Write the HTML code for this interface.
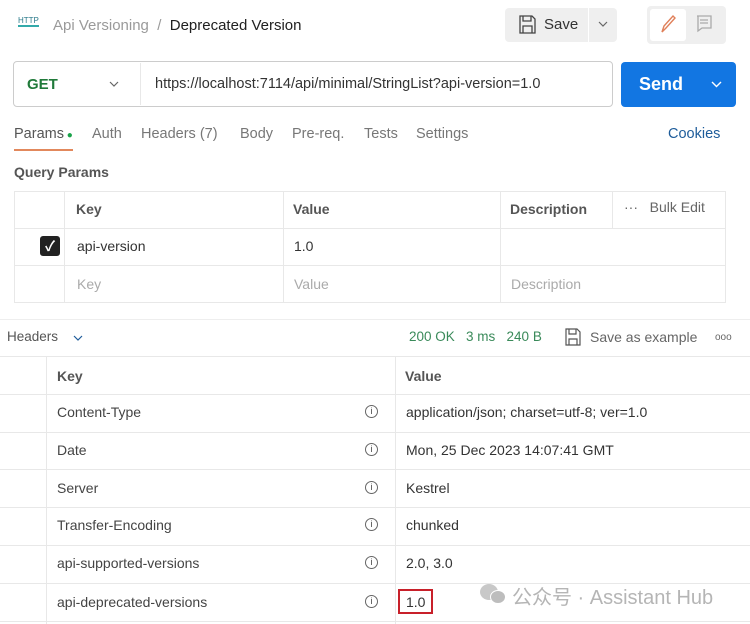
<!DOCTYPE html>
<html><head><meta charset="utf-8"><style>
*{box-sizing:border-box;margin:0;padding:0}
body{width:750px;height:624px;background:#fff;font-family:"Liberation Sans","Noto Sans CJK SC",sans-serif;color:#212121;position:relative;overflow:hidden;font-size:14px}
.a{position:absolute;white-space:nowrap}
.hl{position:absolute;height:1px;background:#e8e8e8}
.vl{position:absolute;width:1px;background:#e8e8e8}
.info{position:absolute;width:13px;height:13px;border:1px solid #666;border-radius:50%;font-size:9px;text-align:center;line-height:11px;color:#444}
</style></head><body>
<div class="a" style="left:18px;top:16px;font-size:8px;color:#2a7a8a;border-bottom:2px solid #3aa;line-height:9px">HTTP</div>
<div class="a" style="left:53px;top:17px;font-size:15px;color:#9a9a9a">Api Versioning&nbsp; /&nbsp; <span style="color:#212121">Deprecated Version</span></div>
<div class="a" style="left:505px;top:8px;width:112px;height:34px;background:#efefef;border-radius:4px"></div>
<div class="a" style="left:588px;top:8px;width:1px;height:34px;background:#fff"></div>
<svg class="a" style="left:519px;top:15px" width="17" height="19" viewBox="0 0 17 19"><path d="M1 1h12l3 3v14H1z M4 1v5h8V1 M4 18v-7h9v7" fill="none" stroke="#444" stroke-width="1.3"/></svg>
<div class="a" style="left:544px;top:16px;font-size:15px;color:#333">Save</div>
<svg class="a" style="left:598px;top:21px" width="10" height="6"><path d="M1 1l4 4 4-4" fill="none" stroke="#666" stroke-width="1.2"/></svg>
<div class="a" style="left:647px;top:6px;width:79px;height:38px;background:#efefef;border-radius:4px"></div>
<div class="a" style="left:650px;top:9px;width:36px;height:32px;background:#fff;border-radius:3px"></div>
<svg class="a" style="left:659px;top:14px" width="18" height="20"><path d="M3 18l2-6 9-10 2 2-9 10z" fill="none" stroke="#e0805a" stroke-width="1.4"/></svg>
<svg class="a" style="left:696px;top:15px" width="16" height="18"><path d="M1 1h14v12H6l-4 3V1z M4 5h8 M4 8h8" fill="none" stroke="#aaa" stroke-width="1.3"/></svg>
<div class="a" style="left:13px;top:61px;width:600px;height:46px;border:1px solid #ccc;border-radius:4px"></div>
<div class="vl" style="left:140px;top:63px;height:42px"></div>
<div class="a" style="left:27px;top:76px;font-size:15px;font-weight:bold;color:#207a3a">GET</div>
<svg class="a" style="left:109px;top:81px" width="10" height="6"><path d="M1 1l4 4 4-4" fill="none" stroke="#666" stroke-width="1.2"/></svg>
<div class="a" style="left:155px;top:76px;font-size:14.5px;color:#333">https://localhost:7114/api/minimal/StringList?api-version=1.0</div>
<div class="a" style="left:621px;top:62px;width:115px;height:45px;background:#1276e2;border-radius:4px"></div>
<div class="a" style="left:639px;top:74px;font-size:18px;font-weight:bold;color:#fff">Send</div>
<svg class="a" style="left:711px;top:81px" width="11" height="7"><path d="M1 1l4.5 4.5L10 1" fill="none" stroke="#fff" stroke-width="1.4"/></svg>
<div class="a" style="left:14px;top:126px;font-size:14.5px;color:#555">Params<span style="color:#1aa34a;font-size:10px"> ●</span></div>
<div class="a" style="left:92px;top:126px;font-size:14.5px;color:#777">Auth</div>
<div class="a" style="left:141px;top:126px;font-size:14.5px;color:#777">Headers (7)</div>
<div class="a" style="left:240px;top:126px;font-size:14.5px;color:#777">Body</div>
<div class="a" style="left:292px;top:126px;font-size:14.5px;color:#777">Pre-req.</div>
<div class="a" style="left:364px;top:126px;font-size:14.5px;color:#777">Tests</div>
<div class="a" style="left:416px;top:126px;font-size:14.5px;color:#777">Settings</div>
<div class="a" style="left:668px;top:126px;font-size:14.5px;color:#1e5c9a">Cookies</div>
<div class="a" style="left:14px;top:149px;width:59px;height:2px;background:#e2885c"></div>
<div class="a" style="left:14px;top:164px;font-size:14px;font-weight:bold;color:#555">Query Params</div>
<div class="a" style="left:14px;top:191px;width:712px;height:112px;border:1px solid #e8e8e8"></div>
<div class="hl" style="left:14px;top:228px;width:712px"></div>
<div class="hl" style="left:14px;top:265px;width:712px"></div>
<div class="vl" style="left:64px;top:191px;height:112px"></div>
<div class="vl" style="left:283px;top:191px;height:112px"></div>
<div class="vl" style="left:500px;top:191px;height:112px"></div>
<div class="vl" style="left:612px;top:191px;height:37px"></div>
<div class="a" style="left:76px;top:201px;font-size:14px;font-weight:bold;color:#555">Key</div>
<div class="a" style="left:293px;top:201px;font-size:14px;font-weight:bold;color:#555">Value</div>
<div class="a" style="left:510px;top:201px;font-size:14px;font-weight:bold;color:#555">Description</div>
<div class="a" style="left:624px;top:199px;font-size:14px;color:#666">···&nbsp;&nbsp; Bulk Edit</div>
<div class="a" style="left:40px;top:236px;width:20px;height:20px;background:#222;border-radius:3px;color:#fff;font-size:14px;text-align:center;line-height:20px;font-weight:bold">✓</div>
<div class="a" style="left:77px;top:238px;font-size:14px;color:#333">api-version</div>
<div class="a" style="left:294px;top:238px;font-size:14px;color:#333">1.0</div>
<div class="a" style="left:77px;top:276px;font-size:14px;color:#aaa">Key</div>
<div class="a" style="left:294px;top:276px;font-size:14px;color:#aaa">Value</div>
<div class="a" style="left:511px;top:276px;font-size:14px;color:#aaa">Description</div>
<div class="hl" style="left:0;top:319px;width:750px;background:#eee"></div>
<div class="a" style="left:7px;top:329px;font-size:13.5px;color:#555">Headers</div>
<svg class="a" style="left:73px;top:335px" width="10" height="6"><path d="M1 1l4 4 4-4" fill="none" stroke="#1e5c9a" stroke-width="1.2"/></svg>
<div class="a" style="left:409px;top:329px;font-size:13.5px;color:#3a8a5a">200 OK&nbsp;&nbsp; 3 ms&nbsp;&nbsp; 240 B</div>
<svg class="a" style="left:565px;top:328px" width="16" height="18"><path d="M1 1h11l3 3v13H1z M4 1v5h7V1 M4 17v-6h8v6" fill="none" stroke="#555" stroke-width="1.2"/></svg>
<div class="a" style="left:590px;top:329px;font-size:14px;color:#666">Save as example</div>
<div class="a" style="left:715px;top:333px;font-size:10px;color:#666;line-height:10px">ooo</div>
<div class="hl" style="left:0;top:356px;width:750px"></div>
<div class="vl" style="left:46px;top:356px;height:268px"></div>
<div class="vl" style="left:395px;top:356px;height:268px"></div>
<div class="a" style="left:57px;top:368px;font-size:14px;font-weight:bold;color:#555">Key</div>
<div class="a" style="left:405px;top:368px;font-size:14px;font-weight:bold;color:#555">Value</div>
<div class="hl" style="left:0;top:394px;width:750px"></div>
<div class="hl" style="left:0;top:432px;width:750px"></div>
<div class="hl" style="left:0;top:469px;width:750px"></div>
<div class="hl" style="left:0;top:507px;width:750px"></div>
<div class="hl" style="left:0;top:545px;width:750px"></div>
<div class="hl" style="left:0;top:583px;width:750px"></div>
<div class="hl" style="left:0;top:621px;width:750px"></div>
<div class="a" style="left:57px;top:404px;color:#444">Content-Type</div><div class="info" style="left:365px;top:405px">i</div><div class="a" style="left:406px;top:404px;color:#333">application/json; charset=utf-8; ver=1.0</div>
<div class="a" style="left:57px;top:442px;color:#444">Date</div><div class="info" style="left:365px;top:443px">i</div><div class="a" style="left:406px;top:442px;color:#333">Mon, 25 Dec 2023 14:07:41 GMT</div>
<div class="a" style="left:57px;top:480px;color:#444">Server</div><div class="info" style="left:365px;top:481px">i</div><div class="a" style="left:406px;top:480px;color:#333">Kestrel</div>
<div class="a" style="left:57px;top:517px;color:#444">Transfer-Encoding</div><div class="info" style="left:365px;top:518px">i</div><div class="a" style="left:406px;top:517px;color:#333">chunked</div>
<div class="a" style="left:57px;top:555px;color:#444">api-supported-versions</div><div class="info" style="left:365px;top:556px">i</div><div class="a" style="left:406px;top:555px;color:#333">2.0, 3.0</div>
<div class="a" style="left:57px;top:594px;color:#444">api-deprecated-versions</div><div class="info" style="left:365px;top:595px">i</div><div class="a" style="left:406px;top:594px;color:#333">1.0</div>
<div class="a" style="left:398px;top:589px;width:35px;height:25px;border:2px solid #c8202a"></div>
<div class="a" style="left:480px;top:584px;width:18px;height:16px;background:#c8c8c8;border-radius:50%"></div>
<div class="a" style="left:490px;top:590px;width:16px;height:14px;background:#bdbdbd;border-radius:50%;border:1px solid #fff"></div>
<div class="a" style="left:512px;top:581px;font-size:20px;color:#b5b5b5">公众号 · Assistant Hub</div>
</body></html>
